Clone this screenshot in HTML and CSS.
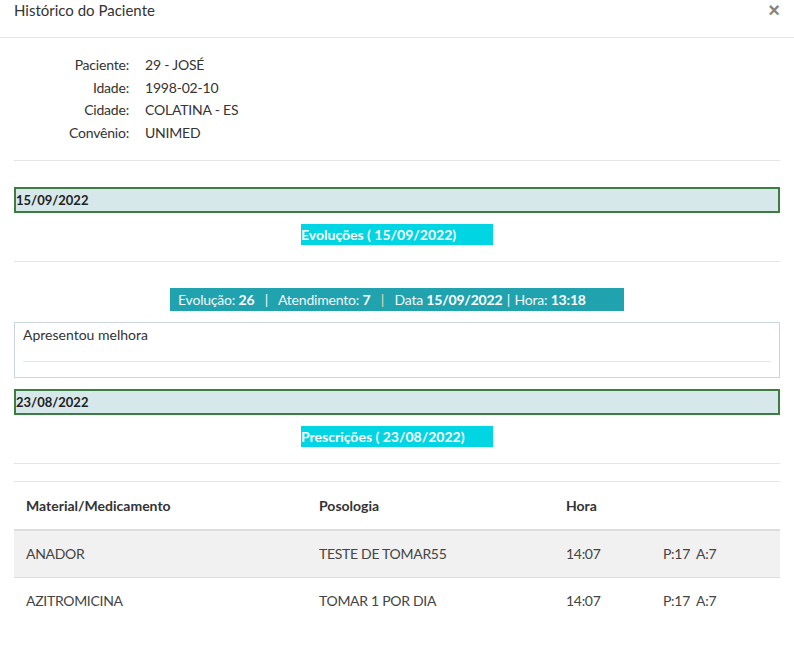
FILE: index.html
```html
<!DOCTYPE html>
<html lang="pt-BR">
<head>
    <meta charset="UTF-8">
    <title>Histórico do Paciente</title>
    <link rel="stylesheet" href="styles.css">
</head>
<body>
    <div class="modal">
        <div class="modal-header">
            <h4 class="modal-title">Histórico do Paciente</h4>
            <button class="close">&times;</button>
        </div>
        <div class="modal-body">
            <dl class="paciente-info">
                <dt>Paciente:</dt><dd>29 - JOSÉ</dd>
                <dt>Idade:</dt><dd>1998-02-10</dd>
                <dt>Cidade:</dt><dd>COLATINA - ES</dd>
                <dt>Convênio:</dt><dd>UNIMED</dd>
            </dl>
            <hr>

            <div class="data-bar">15/09/2022</div>
            <div class="secao-titulo">Evoluções ( 15/09/2022)</div>
            <hr>
            <div class="evolucao-bar">
                Evolução: <b>26</b> <span class="sep">|</span> Atendimento: <b>7</b> <span class="sep sep-alt">|</span> Data <b>15/09/2022</b> <span class="sep sep-curto">|</span> Hora: <b>13:18</b>
            </div>
            <div class="evolucao-texto">
                <p>Apresentou melhora</p>
                <hr>
            </div>

            <div class="data-bar">23/08/2022</div>
            <div class="secao-titulo">Prescrições ( 23/08/2022)</div>
            <hr>
            <table class="tabela">
                <thead>
                    <tr>
                        <th class="col-med">Material/Medicamento</th>
                        <th class="col-pos">Posologia</th>
                        <th class="col-hora">Hora</th>
                        <th></th>
                    </tr>
                </thead>
                <tbody>
                    <tr>
                        <td>ANADOR</td>
                        <td>TESTE DE TOMAR55</td>
                        <td>14:07</td>
                        <td>P:17&nbsp; A:7</td>
                    </tr>
                    <tr>
                        <td>AZITROMICINA</td>
                        <td>TOMAR 1 POR DIA</td>
                        <td>14:07</td>
                        <td>P:17&nbsp; A:7</td>
                    </tr>
                </tbody>
            </table>
        </div>
    </div>
</body>
</html>
```

FILE: styles.css
```css
body {
    margin: 0;
    font-family: Lato, "Open Sans", sans-serif;
    font-size: 14px;
    color: #333;
    background: #fff;
}
.modal-header {
    display: flex;
    justify-content: space-between;
    align-items: flex-start;
    height: 37px;
    padding: 0 14px;
    border-bottom: 1px solid #e5e5e5;
}
.modal-title {
    margin: 0;
    padding-top: 0;
    font-size: 15px;
    font-weight: normal;
    line-height: 20px;
}
.close {
    margin-top: 1px;
    padding: 0;
    border: none;
    background: none;
    font-family: Arial, sans-serif;
    font-size: 20px;
    font-weight: bold;
    line-height: 18px;
    color: #777;
    opacity: 0.9;
}
.modal-body {
    padding: 16px 14px 30px 14px;
}
.paciente-info {
    display: grid;
    grid-template-columns: 115px 1fr;
    column-gap: 16px;
    margin: 0;
    line-height: 1.62;
    letter-spacing: -0.2px;
}
.paciente-info dt {
    text-align: right;
}
.paciente-info dd {
    margin: 0;
}
hr {
    border: none;
    border-top: 1px solid #e5e5e5;
    margin: 15px 0 26px 0;
}
.data-bar {
    height: 22px;
    line-height: 22px;
    padding-left: 0;
    border: 2px solid #3b7d43;
    background-color: #d7e8eb;
    font-size: 13px;
    font-weight: bold;
    color: #222;
}
.secao-titulo {
    width: 192px;
    margin: 11px auto 0 auto;
    height: 21px;
    line-height: 21px;
    background-color: #00d6e3;
    color: #fff;
    font-weight: bold;
}
.secao-titulo + hr {
    margin: 16px 0 26px 0;
}
.evolucao-bar {
    width: 442px;
    margin: 0 auto;
    padding: 0 4px 0 8px;
    height: 23px;
    line-height: 23px;
    background-color: #21a2af;
    color: #f2f6f7;
    white-space: nowrap;
    letter-spacing: -0.2px;
}
.evolucao-bar b {
    color: #fff;
}
.sep {
    margin: 0 7px;
}
.sep-curto {
    margin: 0 1px;
}
.sep-alt {
    color: #e4dcae;
}
.evolucao-texto {
    margin: 11px 0;
    height: 54px;
    padding: 0 8px;
    border: 1px solid #c9d6da;
}
.evolucao-texto p {
    margin: 4px 0 0 0;
    line-height: 16px;
}
.evolucao-texto hr {
    margin: 18px 0 0 0;
}
.tabela {
    width: 100%;
    border-collapse: collapse;
    margin-top: -9px;
}
.tabela th,
.tabela td {
    text-align: left;
    padding: 0 12px;
}
.tabela th {
    height: 47px;
    border-top: 1px solid #e5e5e5;
    border-bottom: 2px solid #ddd;
    font-size: 14px;
    font-weight: bold;
}
.tabela td {
    height: 46px;
    border-bottom: 1px solid #ddd;
    font-size: 14px;
    font-weight: normal;
    color: #444;
    letter-spacing: -0.3px;
}
.tabela tbody tr:nth-child(odd) {
    background-color: #f1f1f1;
}
.tabela tbody tr:last-child td {
    border-bottom: none;
}
.col-med { width: 269px; }
.col-pos { width: 223px; }
.col-hora { width: 73px; }
```
